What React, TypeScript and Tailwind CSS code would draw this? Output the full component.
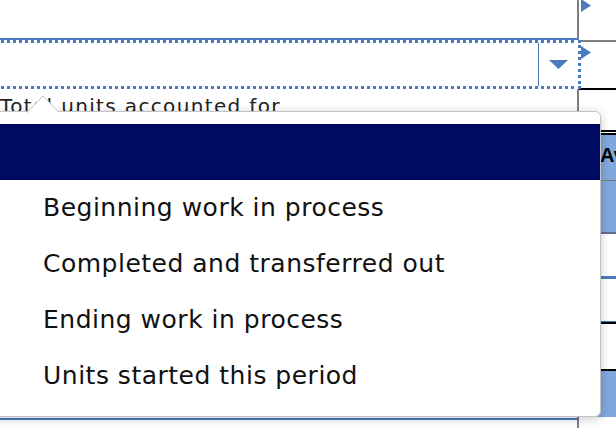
const options = [
  'Beginning work in process',
  'Completed and transferred out',
  'Ending work in process',
  'Units started this period',
]

function RightArrow() {
  return (
    <svg width="11" height="13" viewBox="0 0 11 13" className="block">
      <polygon points="0,0 10,6.5 0,13" fill="#4a7bbf" />
    </svg>
  )
}

export default function App() {
  return (
    <div className="relative w-[616px] h-[428px] overflow-hidden bg-white font-['DejaVu_Sans',sans-serif]">
      {/* Background worksheet */}
      <div className="flex h-full">
        {/* Left column */}
        <div className="w-[579px] shrink-0 flex flex-col">
          <div className="h-[40px] border-b-2 border-[#4a7bbf] border-r-2 border-r-[#7f7f7f]" />
          <div className="h-[49px] -ml-[6px] mr-[-2px] relative z-10 flex border-[3px] border-dotted border-[#4a7bbf] bg-white">
            <div className="flex-1 border-r border-[#4a7bbf]" />
            <div className="w-[39px] flex items-center justify-center">
              <svg width="19" height="9" viewBox="0 0 19 9">
                <polygon points="0,0 19,0 9.5,9" fill="#4a7bbf" />
              </svg>
            </div>
          </div>
          <div className="flex-1 border-r-2 border-[#7f7f7f]">
            <div className="pt-[5px] text-[20px] leading-[24px] tracking-[1.35px] text-[#222] whitespace-nowrap">
              Total units accounted for
            </div>
          </div>
          <div className="h-[10px] border-t-2 border-[#4a7bbf] border-r-2 border-r-[#7f7f7f]" />
        </div>

        {/* Right column */}
        <div className="flex-1 min-w-0 overflow-hidden flex flex-col">
          <div className="h-[42px] border-b-2 border-[#7f7f7f] pl-[2px]">
            <div className="-mt-[1px]">
              <RightArrow />
            </div>
          </div>
          <div className="h-[48px] border-b-2 border-black pl-[2px] pt-[4px]">
            <RightArrow />
          </div>
          <div className="h-[40px]" />
          <div className="h-[5px] border-t-[5px] border-double border-black" />
          <div className="h-[46px] bg-[#80a8dc] border-b border-[#7a7a7a] pl-[21px] pt-[8px] whitespace-nowrap">
            <span className="font-['Liberation_Sans',sans-serif] font-bold text-[20px] leading-[24px] text-black">
              Avg
            </span>
          </div>
          <div className="h-[53px] bg-[#80a8dc] border-b-2 border-[#5c6f8e]" />
          <div className="h-[42px]" />
          <div className="h-[45px] border-t-[3px] border-[#4a7bbf]" />
          <div className="h-[1px] bg-[#4a7bbf]" />
          <div className="h-[47px] border-t-2 border-black" />
          <div className="h-[48px] border-t-2 border-black bg-[#80a8dc]" />
          <div className="flex-1" />
        </div>
      </div>

      {/* Dropdown list popup */}
      <div className="absolute left-[-10px] top-[111px] w-[611px] h-[306px] bg-white border border-[#c4c4c4] rounded-[6px] shadow-[0_2px_10px_rgba(0,0,0,0.22)] py-[12px]">
        <svg
          width="34"
          height="18"
          viewBox="0 0 34 18"
          className="absolute left-[36px] top-[-17px]"
        >
          <polygon points="0,17.5 16,1 32,17.5" fill="white" stroke="#c4c4c4" strokeWidth="1" />
          <rect x="0.8" y="17" width="31" height="2" fill="white" />
        </svg>
        <div className="h-[56px] bg-[#000a60]" />
        {options.map((o) => (
          <div
            key={o}
            className="h-[56px] pl-[52px] text-[25px] leading-[56px] tracking-[0.5px] text-[#111] whitespace-nowrap"
          >
            {o}
          </div>
        ))}
      </div>
    </div>
  )
}
